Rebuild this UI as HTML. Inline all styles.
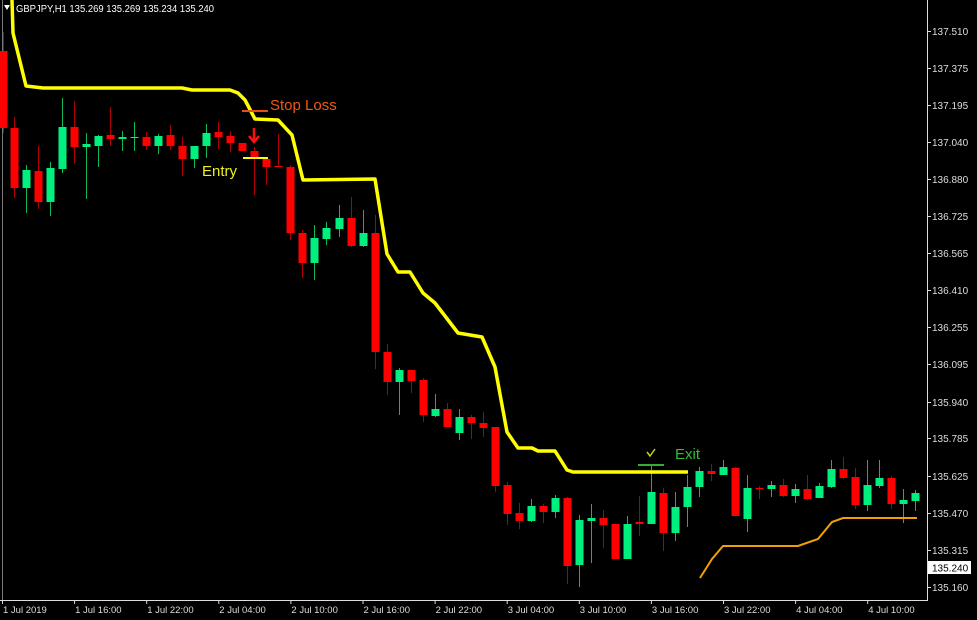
<!DOCTYPE html>
<html><head><meta charset="utf-8"><style>
html,body{margin:0;padding:0;background:#000;width:977px;height:620px;overflow:hidden}
svg{display:block}
text{font-family:"Liberation Sans",sans-serif}
</style></head><body>
<svg id="s" width="977" height="620" xmlns="http://www.w3.org/2000/svg">
<rect width="977" height="620" fill="#000"/>
<line x1="2.5" y1="0" x2="2.5" y2="600" stroke="#777" stroke-width="1"/>
<g id="c"></g>
<polyline fill="none" stroke="#ffff00" stroke-width="3.5" stroke-linejoin="round" points="12,0 13,33 26,86 43,88 182,88 192,90 230,90 238,93 245,100 255,119 278,120 292,135 303,180 375,179 387,254 398,272 410,272 423,293 435,303 458,333 482,337 495,367 507,432 518,448 532,448 538,451 555,451 567,470 573,472 688,472"/>
<polyline fill="none" stroke="#f0a000" stroke-width="2" points="700,578 712,559 723,546 798,546 818,539 832,522 843,518 917,518"/>
<line x1="242" y1="111" x2="268" y2="111" stroke="#e85010" stroke-width="2"/>
<text x="270" y="110" font-size="15" fill="#f05a10">Stop Loss</text>
<path d="M254,128 V141 M249,136 L254,142 L259,136" fill="none" stroke="#ff1010" stroke-width="2.5"/>
<line x1="243" y1="158" x2="268" y2="158" stroke="#ffff00" stroke-width="2"/>
<text x="202" y="176" font-size="15" fill="#f0f020">Entry</text>
<path d="M647,452 L650,456 L655,449" fill="none" stroke="#c8d020" stroke-width="1.5"/>
<line x1="638" y1="465" x2="664" y2="465" stroke="#30b030" stroke-width="2"/>
<text x="675" y="459" font-size="15" fill="#30c030">Exit</text>
<line x1="927.5" y1="0" x2="927.5" y2="601" stroke="#ddd"/>
<line x1="0" y1="600.5" x2="928" y2="600.5" stroke="#ddd"/>
<g id="ax" font-size="10" fill="#ddd"></g>
<rect x="928" y="561" width="43" height="13" fill="#fff"/>
<text x="932" y="571.5" font-size="10" fill="#000">135.240</text>
<path d="M4,5 L10,5 L7,10 Z" fill="#fff"/>
<text x="16" y="12" font-size="10" fill="#fff" textLength="198" lengthAdjust="spacingAndGlyphs">GBPJPY,H1  135.269 135.269 135.234 135.240</text>
</svg>
<script>
var D=[[3,51,128,32,133,0],[14,128,188,117,198,0],[26,170,188,165,213,1],[38,171,202,146,209,0],[50,168,202,162,216,1],[62,127,169,98,173,1],[74,127,147,101,164,0],[86,144,147,133,199,1],[98,136,146,135,167,1],[110,135,139,107,146,0],[122,137,139,131,151,1],[134,137,138,122,151,1],[146,137,146,132,150,0],[158,136,146,134,154,1],[170,135,146,125,150,0],[182,146,159,137,176,0],[194,146,159,146,168,1],[206,133,146,124,158,1],[218,132,137,122,149,0],[230,136,143,131,152,0],[242,143,151,143,151,0],[254,151,157,147,195,0],[266,159,167,157,185,0],[278,166,167,134,167,0],[290,167,233,165,240,0],[302,233,263,230,278,0],[314,238,263,225,280,1],[326,228,239,222,245,1],[339,218,229,205,237,1],[351,218,246,197,247,0],[363,233,246,210,247,1],[375,233,352,215,369,0],[387,352,382,344,395,0],[399,370,382,368,415,1],[411,370,381,370,393,0],[423,380,415,378,422,0],[435,409,416,394,417,1],[447,409,427,403,427,0],[459,417,433,409,440,1],[471,417,423,415,439,0],[483,423,428,412,437,0],[495,427,486,427,492,0],[507,485,514,482,525,0],[519,513,521,503,529,0],[531,506,521,499,522,1],[543,506,512,504,523,0],[555,498,512,495,518,1],[567,498,566,497,584,0],[579,520,565,515,587,1],[591,518,521,504,563,1],[603,518,525,510,548,0],[615,524,559,524,559,0],[627,524,559,516,559,1],[639,522,524,496,536,0],[651,492,524,466,524,1],[663,493,533,488,551,0],[675,507,533,492,541,1],[687,487,507,475,527,1],[699,471,487,467,497,1],[711,471,474,464,481,0],[723,467,475,460,475,1],[735,468,516,467,516,0],[747,488,519,475,532,1],[759,488,489,486,499,0],[771,485,489,481,497,1],[783,485,496,479,497,0],[795,489,496,484,503,1],[807,489,499,475,500,0],[819,486,498,483,498,1],[831,469,487,460,488,1],[843,469,478,457,479,0],[855,477,505,468,509,0],[867,485,505,460,511,1],[879,478,486,460,488,1],[891,478,504,476,509,0],[903,500,504,489,523,1],[915,493,501,490,511,1]];
var g=document.getElementById('c'),h='';
D.forEach(function(d){var bull=d[5],bc=bull?'#00f080':'#ff0000',wc=bull?'#10b858':'#b00000';
h+='<line x1="'+(d[0]+.5)+'" y1="'+d[3]+'" x2="'+(d[0]+.5)+'" y2="'+d[4]+'" stroke="'+wc+'"/>';
var hh=Math.max(1,d[2]-d[1]);h+='<rect x="'+(d[0]-3.5)+'" y="'+d[1]+'" width="8" height="'+hh+'" fill="'+bc+'"/>';});
g.innerHTML=h;
var L=[['137.510',31],['137.375',68],['137.195',105],['137.040',142],['136.880',179],['136.725',216],['136.565',253],['136.410',290],['136.255',327],['136.095',364],['135.940',402],['135.785',438],['135.625',476],['135.470',513],['135.315',550],['135.160',587]];
var a='';L.forEach(function(l){a+='<line x1="928" y1="'+(l[1]+.5)+'" x2="931" y2="'+(l[1]+.5)+'" stroke="#ddd"/><text x="932" y="'+(l[1]+4)+'">'+l[0]+'</text>';});
var T=['1 Jul 2019','1 Jul 16:00','1 Jul 22:00','2 Jul 04:00','2 Jul 10:00','2 Jul 16:00','2 Jul 22:00','3 Jul 04:00','3 Jul 10:00','3 Jul 16:00','3 Jul 22:00','4 Jul 04:00','4 Jul 10:00'];
T.forEach(function(t,i){var x=2+i*72.1;a+='<line x1="'+(x+.5)+'" y1="601" x2="'+(x+.5)+'" y2="604" stroke="#ddd"/><text x="'+(x+1)+'" y="613" font-size="9.5">'+t+'</text>';});
document.getElementById('ax').innerHTML=a;
</script>
</body></html>
